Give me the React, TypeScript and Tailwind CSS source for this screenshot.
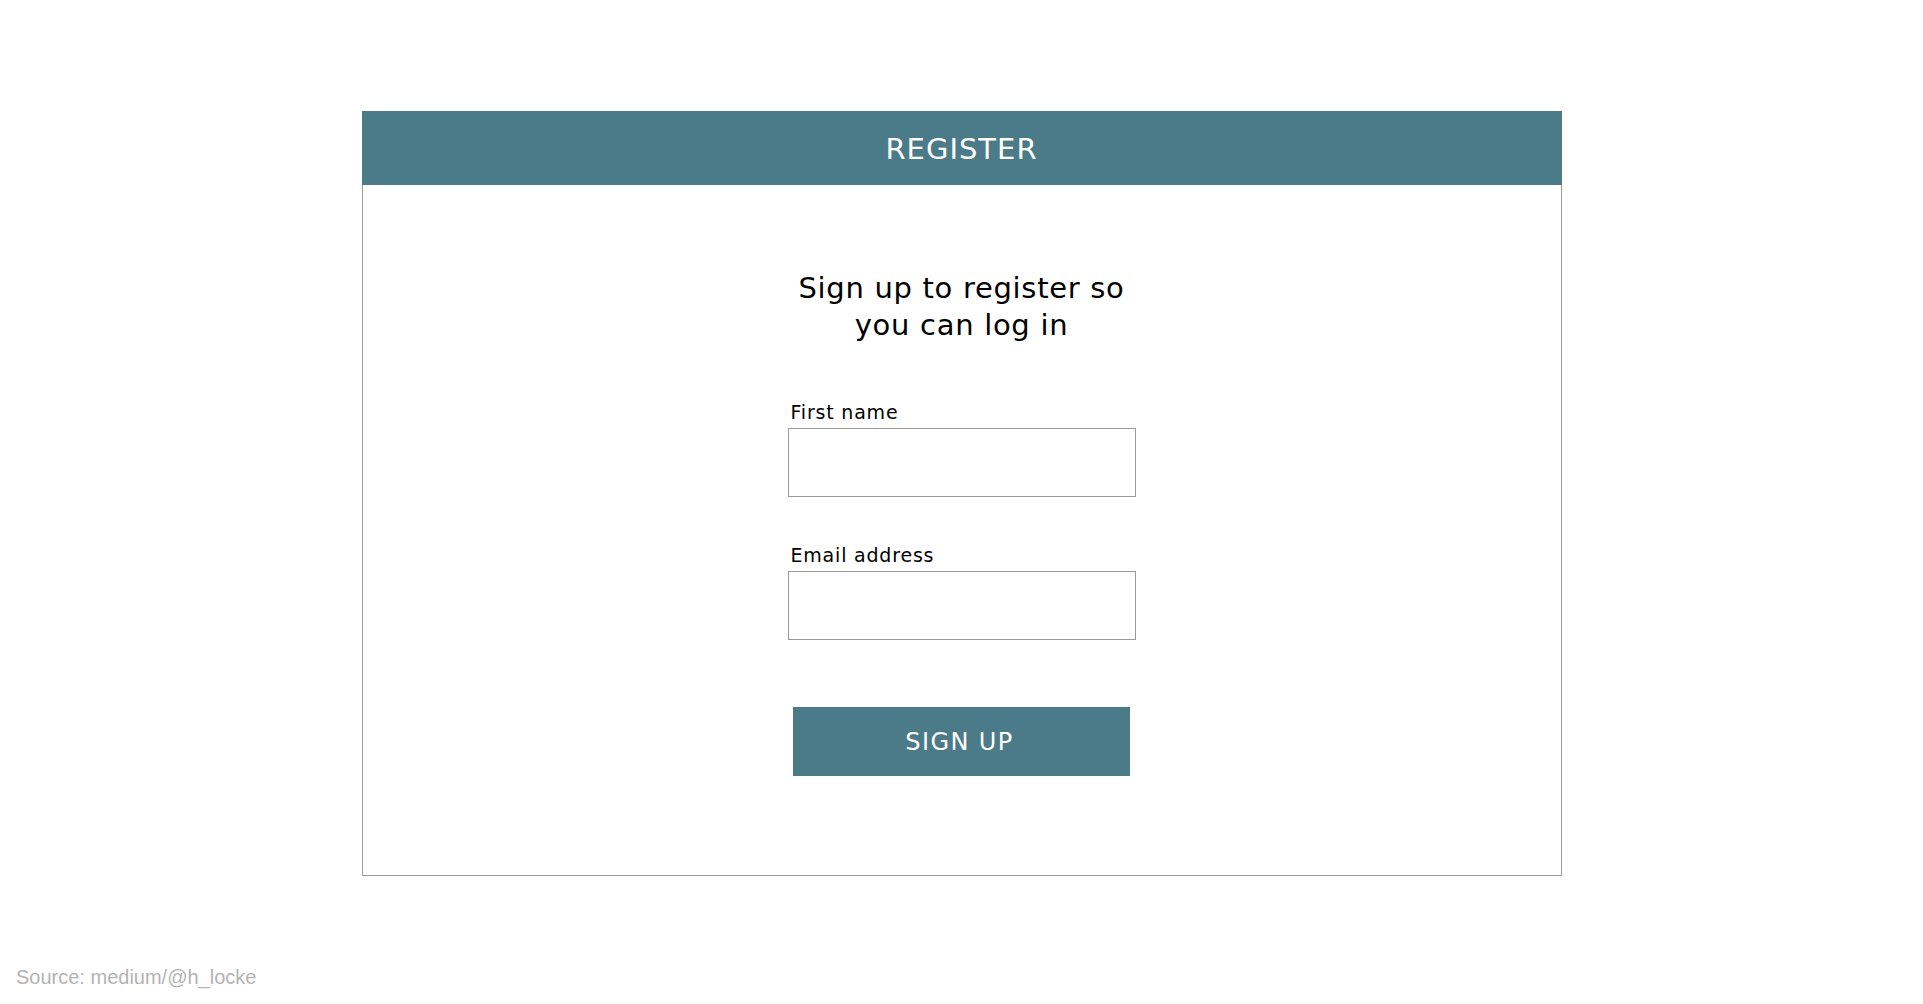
import React from "react";

const font = { fontFamily: '"DejaVu Sans", Verdana, sans-serif' };

function Field({ label }: { label: string }) {
  return (
    <div className="flex flex-col w-[348px]">
      <label className="pl-[3px] text-[19px] leading-[24px] tracking-[0.8px] text-black">{label}</label>
      <div className="mt-[4px] h-[69px] w-full border border-[#9a9a9a] bg-white" />
    </div>
  );
}

export default function App() {
  return (
    <div className="min-h-screen bg-white pt-[111px]" style={font}>
      <div className="mx-auto w-[1200px] border border-t-0 border-[#9a9a9a]">
        <div className="-mx-px flex h-[74px] items-center justify-center bg-[#4b7a88] pt-[2px]">
          <span className="text-[29px] leading-none tracking-[1px] text-white">REGISTER</span>
        </div>
        <div className="flex flex-col items-center pt-[85px] pb-[99px]">
          <h1 className="text-center text-[29px] leading-[37px] tracking-[0.7px] text-black">
            Sign up to register so
            <br />
            you can log in
          </h1>
          <div className="mt-[56px] flex flex-col gap-[46px]">
            <Field label="First name" />
            <Field label="Email address" />
          </div>
          <button className="mt-[67px] flex h-[69px] w-[337px] items-center justify-center bg-[#4b7a88] pr-[4px] text-[24px] tracking-[1.4px] text-white">
            SIGN UP
          </button>
        </div>
      </div>
      <div
        className="mt-[89px] pl-[16px] text-[20px] leading-[24px] text-[#b3b3b3]"
        style={{ fontFamily: '"Liberation Sans", Arial, sans-serif' }}
      >
        Source: medium/@h_locke
      </div>
    </div>
  );
}
